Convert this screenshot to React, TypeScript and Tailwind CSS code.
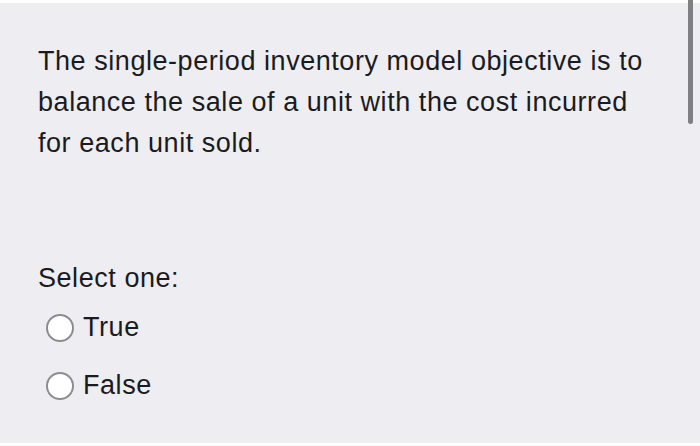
export default function App() {
  return (
    <div className="w-[700px] h-[446px] bg-white pt-[3px] pb-[3px] font-['Liberation_Sans',Arial,sans-serif]">
      <div className="relative h-full bg-[#ededf2] text-[#1b1b1d]">
        <div className="absolute right-[7px] top-[-3px] h-[124px] w-[5px] rounded-b-full bg-[#808084]" />
        <div className="pl-[38px] pt-[38px]">
          <p className="w-[618px] text-[27px] leading-[41px] tracking-[0.55px]">
            The single-period inventory model objective is to balance the sale of a unit with the cost incurred for each unit sold.
          </p>
          <div className="mt-[94px] text-[27px] leading-[41px] tracking-[0.55px]">Select one:</div>
          <div className="mt-[8px] flex flex-col gap-[17px] pl-[8px]">
            {['True', 'False'].map((label) => (
              <label key={label} className="flex items-center gap-[9px] text-[27px] leading-[41px] tracking-[0.55px]">
                <span className="h-[28px] w-[28px] rounded-full border-[2.5px] border-[#8d8d91] bg-white" />
                {label}
              </label>
            ))}
          </div>
        </div>
      </div>
    </div>
  )
}
